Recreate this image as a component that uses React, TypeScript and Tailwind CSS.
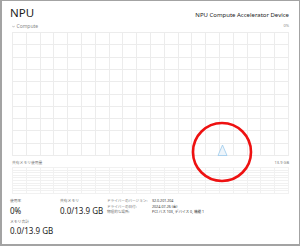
import React from "react";

function Grid({ w, h, cols, rows, color, children }: { w: number; h: number; cols: number; rows: number; color: string; children?: React.ReactNode }) {
  const v: number[] = [];
  for (let i = 0; i <= cols; i++) v.push(Math.round((i * w) / cols) + 0.5);
  const hz: number[] = [];
  for (let j = 0; j <= rows; j++) hz.push(Math.round((j * h) / rows) + 0.5);
  return (
    <svg width={w + 1} height={h + 1} className="block">
      {v.map((x, i) => (
        <line key={"v" + i} x1={x} y1={0} x2={x} y2={h + 1} stroke={color} strokeWidth={1} />
      ))}
      {hz.map((y, i) => (
        <line key={"h" + i} x1={0} y1={y} x2={w + 1} y2={y} stroke={color} strokeWidth={1} />
      ))}
      {children}
    </svg>
  );
}

export default function App() {
  const font = "font-['Noto_Sans','Noto_Sans_CJK_JP',sans-serif]";
  return (
    <div className={`relative w-[300px] h-[246px] bg-white border-l-2 border-t border-r border-b-2 border-[#a3a3a3] ${font} overflow-hidden`}>
      {/* header */}
      <div className="mt-[5px] h-[14px] pl-[8px] pr-[10px] flex items-baseline justify-between">
        <span className="text-[11.5px] leading-[14px] text-[#1b1b1b]">NPU</span>
        <span className="text-[6px] leading-[14px] text-[#1b1b1b]">NPU Compute Accelerator Device</span>
      </div>
      {/* compute label row */}
      <div className="mt-[3px] h-[6px] pl-[10px] pr-[10px] flex items-center justify-between">
        <div className="flex items-center gap-[1.5px]">
          <svg width="3" height="3" viewBox="0 0 3 3" className="block">
            <polyline points="0.3,0.8 1.5,2.2 2.7,0.8" fill="none" stroke="#999" strokeWidth="0.6" />
          </svg>
          <span className="text-[5px] leading-[6px] text-[#8a8a8a]">Compute</span>
        </div>
        <span className="text-[4px] leading-[6px] text-[#8a8a8a]">0%</span>
      </div>
      {/* chart 1 */}
      <div className="mt-[3px] pl-[10px]">
        <Grid w={276} h={123} cols={20} rows={10} color="#ececec">
          <polygon points="206,123.5 210.5,113 215,123.5" fill="#eef5fb" stroke="#9ccaec" strokeWidth="0.8" />
        </Grid>
      </div>
      {/* shared memory label row */}
      <div className="mt-[4px] h-[6px] pl-[10px] pr-[10px] flex items-center justify-between">
        <span className="text-[3.8px] leading-[6px] text-[#7a7a7a]">共有メモリ使用量</span>
        <span className="text-[4px] leading-[6px] text-[#7a7a7a]">13.9 GB</span>
      </div>
      {/* chart 2 */}
      <div className="mt-[1px] pl-[10px]">
        <Grid w={276} h={26} cols={20} rows={10} color="#f1f1f1" />
      </div>
      {/* stats */}
      <div className="mt-[4px] pl-[8px] flex">
        <div className="w-[50px] flex flex-col">
          <span className="text-[3.8px] leading-[5px] text-[#6e6e6e]">使用率</span>
          <span className="mt-[3px] text-[8px] leading-[10px] text-[#1b1b1b]">0%</span>
          <span className="mt-[3px] text-[3.8px] leading-[5px] text-[#6e6e6e]">メモリ合計</span>
          <span className="mt-[2px] text-[8px] leading-[10px] text-[#1b1b1b]">0.0/13.9 GB</span>
        </div>
        <div className="w-[47px] flex flex-col">
          <span className="text-[3.8px] leading-[5px] text-[#6e6e6e]">共有メモリ</span>
          <span className="mt-[3px] text-[8px] leading-[10px] text-[#1b1b1b]">0.0/13.9 GB</span>
        </div>
        <div className="grid grid-cols-[45px_auto] auto-rows-[5.5px] items-center">
          <span className="text-[3.6px] leading-[5px] text-[#6e6e6e]">ドライバーのバージョン:</span>
          <span className="text-[3.6px] leading-[5px] text-[#333]">32.0.201.204</span>
          <span className="text-[3.6px] leading-[5px] text-[#6e6e6e]">ドライバーの日付:</span>
          <span className="text-[3.6px] leading-[5px] text-[#333]">2024-07-26 (金)</span>
          <span className="text-[3.6px] leading-[5px] text-[#6e6e6e]">物理的な場所:</span>
          <span className="text-[3.6px] leading-[5px] text-[#333]">PCI バス 103, デバイス 0, 機能 1</span>
        </div>
      </div>
      {/* red annotation circle */}
      <svg width="66" height="66" className="absolute left-[187px] top-[118px] pointer-events-none">
        <circle cx="33" cy="33" r="29" fill="none" stroke="#ee1111" strokeWidth="2.6" />
      </svg>
    </div>
  );
}
